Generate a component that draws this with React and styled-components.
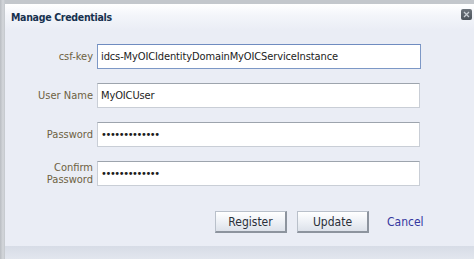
import React from 'react';
import styled, { createGlobalStyle } from 'styled-components';

const GlobalStyle = createGlobalStyle`
  html, body {
    margin: 0;
    padding: 0;
    background: #c6cacf;
    overflow: hidden;
  }
  * {
    box-sizing: border-box;
  }
`;

const uiFont = "'DejaVu Sans Condensed', 'DejaVu Sans', 'Liberation Sans', sans-serif";

const Frame = styled.div`
  width: 474px;
  height: 259px;
  padding: 4px 0 0 5px;
  background: linear-gradient(90deg, #b9bdc2 0, #d4d7db 3px, #c3c7cc 5px);
`;

const Panel = styled.div`
  display: flex;
  flex-direction: column;
  height: 255px;
  background: #eaedf5;
  font-family: ${uiFont};
  font-stretch: condensed;
`;

const Header = styled.div`
  display: flex;
  align-items: flex-start;
  justify-content: space-between;
  height: 26px;
  padding: 5px 2px 0 6px;
  background: linear-gradient(180deg, #ffffff 0%, #f3f5fa 45%, #eaedf5 100%);
`;

const Title = styled.h1`
  margin: 0;
  padding-top: 1px;
  font-size: 10.5px;
  letter-spacing: -0.3px;
  font-weight: bold;
  color: #17314f;
  line-height: 14px;
`;

const CloseButton = styled.button`
  display: flex;
  align-items: center;
  justify-content: center;
  width: 11px;
  height: 11px;
  padding: 0;
  border: 0;
  border-radius: 2px;
  background: linear-gradient(180deg, #6c737b, #4c535b);
`;

const Form = styled.div`
  display: flex;
  flex-direction: column;
  gap: 14px;
  padding-top: 14px;
  flex: 1;
`;

const Row = styled.div`
  display: flex;
  align-items: center;
  gap: 4px;
`;

const Label = styled.label`
  width: 88px;
  text-align: right;
  font-size: 11px;
  line-height: 12px;
  color: #6d6142;
`;

const Field = styled.input`
  width: 323px;
  height: 25px;
  padding: 0 3px;
  margin: 0;
  font-family: ${uiFont};
  font-stretch: condensed;
  font-size: 11px;
  letter-spacing: ${(p) => (p.type === 'password' ? '-1.4px' : '-0.12px')};
  color: #1c1c1c;
  background: #ffffff;
  border: 1px solid ${(p) => (p.$focused ? '#7d98c6' : '#c9ced6')};
  border-top-color: ${(p) => (p.$focused ? '#6f8cc0' : '#9da4ad')};
  outline: none;
  ${(p) => p.$focused && 'width: 324px;'}
`;

const Actions = styled.div`
  display: flex;
  align-items: center;
  gap: 10px;
  padding: 11px 0 0 210px;
`;

const Button = styled.button`
  width: 72px;
  height: 22px;
  padding: 0;
  font-family: ${uiFont};
  font-stretch: condensed;
  font-size: 12px;
  color: #2a2f38;
  background: linear-gradient(180deg, #ffffff 0%, #eef1f6 50%, #dde2ea 100%);
  border: 1px solid #b9c0ca;
  border-right: 2px solid #8d949e;
  border-bottom: 2px solid #8d949e;
`;

const CancelLink = styled.a`
  margin-left: 8px;
  font-size: 12px;
  color: #35379f;
  text-decoration: none;
`;

const Footer = styled.div`
  height: 13px;
  background: linear-gradient(180deg, #d7dce6, #e2e6ee);
`;

const CloseIcon = () => (
  <svg width="7" height="7" viewBox="0 0 7 7">
    <path d="M1 1 L6 6 M6 1 L1 6" stroke="#c9ced4" strokeWidth="1.3" />
  </svg>
);

const App = () => {
  return (
    <>
      <GlobalStyle />
      <Frame>
        <Panel>
          <Header>
            <Title>Manage Credentials</Title>
            <CloseButton aria-label="Close">
              <CloseIcon />
            </CloseButton>
          </Header>
          <Form>
            <Row>
              <Label>csf-key</Label>
              <Field $focused readOnly defaultValue="idcs-MyOICIdentityDomainMyOICServiceInstance" />
            </Row>
            <Row>
              <Label>User Name</Label>
              <Field readOnly defaultValue="MyOICUser" />
            </Row>
            <Row>
              <Label>Password</Label>
              <Field type="password" readOnly defaultValue="welcome123456" />
            </Row>
            <Row>
              <Label>
                Confirm
                <br />
                Password
              </Label>
              <Field type="password" readOnly defaultValue="welcome123456" />
            </Row>
            <Actions>
              <Button>Register</Button>
              <Button>Update</Button>
              <CancelLink href="#">Cancel</CancelLink>
            </Actions>
          </Form>
          <Footer />
        </Panel>
      </Frame>
    </>
  );
};

export default App;
